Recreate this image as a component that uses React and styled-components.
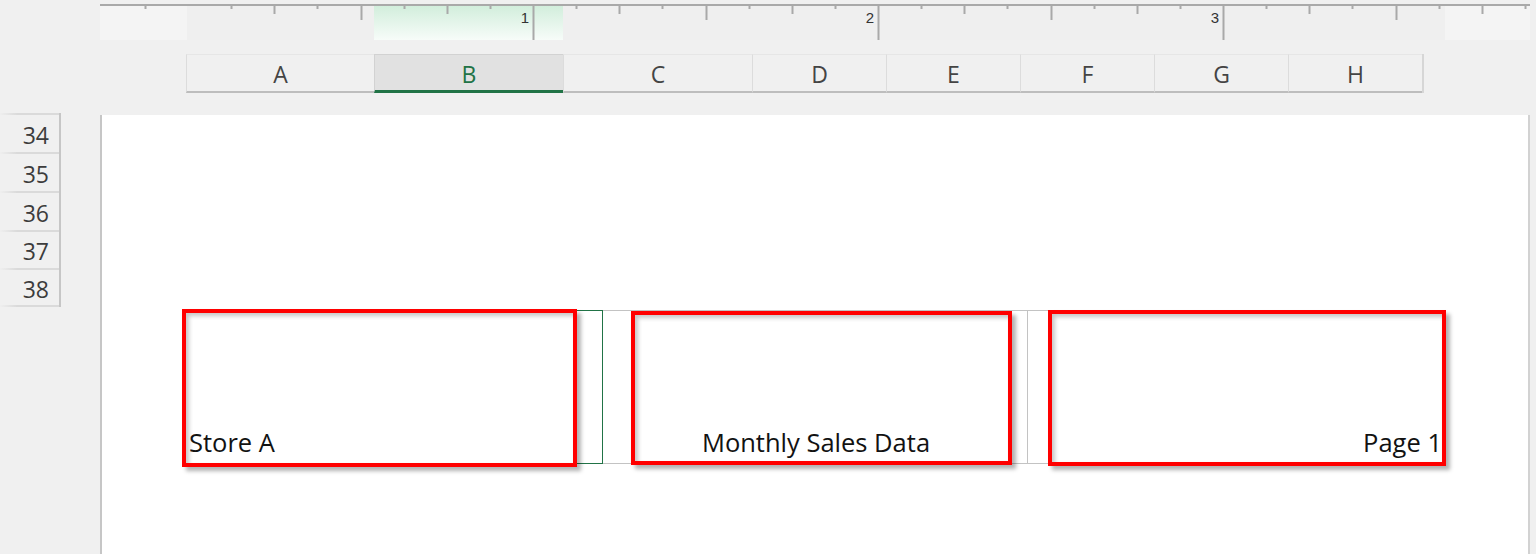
import React from "react";
import styled, { createGlobalStyle } from "styled-components";

const GlobalStyle = createGlobalStyle`
    html, body {
        margin: 0;
        padding: 0;
        background: #f0f0f0;
        overflow: hidden;
    }
`

const Screen = styled.div`
    width: 1536px;
    height: 554px;
    overflow: hidden;
    background: #f0f0f0;
    font-family: "Open Sans", "Noto Sans", sans-serif;
`

// ---- ruler ----
const RulerBar = styled.div`
    height: 40px;
    padding: 4px 0 0 100px;
    box-sizing: border-box;
`
const Ruler = styled.div`
    position: relative;
    width: 1430px;
    height: 34px;
    border-top: 2px solid #a9a9a9;
    display: flex;
`
const RulerMargin = styled.div`
    width: ${p => p.w}px;
    background: #f4f4f4;
`
const RulerBody = styled.div`
    flex: 1;
    background: #efefef;
    display: flex;
`
const RulerHighlight = styled.div`
    margin-left: ${p => p.offset}px;
    width: ${p => p.w}px;
    background: linear-gradient(#d2eedc, #f7fcf9);
`
const Ticks = styled.svg`
    position: absolute;
    left: 0;
    top: 0;
`
const RulerNumber = styled.span`
    position: absolute;
    top: 3px;
    font-family: "Liberation Sans", sans-serif;
    font-size: 15px;
    color: #333;
    transform: translateX(-100%);
`

// ---- column headers ----
const HeaderBar = styled.div`
    height: 73px;
    padding: 14px 0 0 186px;
    box-sizing: border-box;
`
const ColumnHeaders = styled.div`
    display: flex;
    height: 39px;
    width: 1236px;
    box-shadow: 2px 0 0 #d6d6d6;
`
const ColHead = styled.div`
    width: ${p => p.w}px;
    box-sizing: border-box;
    display: flex;
    align-items: center;
    justify-content: center;
    font-size: 23px;
    color: ${p => (p.active ? "#217346" : "#444")};
    background: ${p => (p.active ? "#e1e1e1" : "#f0f0f0")};
    border-left: 1px solid ${p => (p.active ? "#d2d2d2" : "#dcdcdc")};
    border-top: 1px solid ${p => (p.active ? "#d2d2d2" : "#e6e6e6")};
    border-bottom: ${p => (p.active ? "3px solid #217346" : "2px solid #bdbdbd")};
    padding-top: 2px;
`

// ---- body ----
const Body = styled.div`
    display: flex;
`
const RowHeaders = styled.div`
    width: 59px;
    border-right: 2px solid #c6c6c6;
    align-self: flex-start;
`
const RowHead = styled.div`
    height: ${p => p.h}px;
    box-sizing: border-box;
    display: flex;
    align-items: center;
    justify-content: flex-end;
    padding: 2px 10px 0 0;
    font-size: 23px;
    color: #3c3c3c;
    border-top: 2px solid transparent;
    border-image: linear-gradient(to right, #f0f0f0, #dadada 30%) 1;
    border-image-slice: 1;
    &:last-child {
        border-bottom: 2px solid transparent;
    }
`
const Page = styled.div`
    margin: 2px 0 0 39px;
    width: 1430px;
    height: 450px;
    box-sizing: border-box;
    background: #fff;
    border-left: 2px solid #c6c6c6;
    border-right: 2px solid #d2d2d2;
    padding: 195px 0 0 81px;
`
const Footer = styled.div`
    display: flex;
    height: 154px;
    font-family: "Open Sans", sans-serif;
    font-size: 25.5px;
    color: #121212;
`
const Section = styled.div`
    position: relative;
    width: ${p => p.w}px;
    box-sizing: border-box;
    display: flex;
    align-items: flex-end;
    justify-content: ${p => p.align};
    padding: 0 3px 9px 5px;
    line-height: 24px;
    border-top: 1px solid #c3c3c3;
    border-bottom: 1px solid #c3c3c3;
    border-right: 1px solid #c3c3c3;
    ${p => p.selected && `
        border: 1px solid #217346;
    `}
`
const Highlight = styled.div`
    position: absolute;
    left: ${p => p.x}px;
    top: ${p => p.y}px;
    width: ${p => p.w}px;
    height: ${p => p.h}px;
    box-sizing: border-box;
    border: 4px solid #ff0000;
    box-shadow: 4px 4px 4px rgba(0, 0, 0, 0.3), inset 3px 3px 4px rgba(0, 0, 0, 0.22);
    pointer-events: none;
`
const Label = styled.span`
    position: relative;
    z-index: 1;
`

const columns = [
    ["A", 188], ["B", 189], ["C", 189], ["D", 134],
    ["E", 134], ["F", 134], ["G", 134], ["H", 134],
];
const rows = [[34, 39], [35, 39], [36, 39], [37, 38], [38, 39]];

const ORIGIN = 88;
const STEP = 43.125;

const RulerTicks = () => {
    const lines = [];
    for (let k = -1; k <= 31; k++) {
        if (k === 0) continue;
        const x = Math.round(ORIGIN + k * STEP) + 0.5;
        let len = 3;
        if (k % 8 === 0) len = 34;
        else if (k % 4 === 0) len = 14;
        else if (k % 2 === 0) len = 8;
        lines.push(<line key={k} x1={x} x2={x} y1={0} y2={len} stroke="#a9a9a9" strokeWidth="2" />);
    }
    return (
        <Ticks width="1430" height="34">
            {lines}
        </Ticks>
    );
};

const App = () => {
    return (
        <Screen>
            <GlobalStyle />
            <RulerBar>
                <Ruler>
                    <RulerMargin w={87} />
                    <RulerBody>
                        <RulerHighlight offset={187} w={189} />
                    </RulerBody>
                    <RulerMargin w={85} />
                    <RulerTicks />
                    {[1, 2, 3].map(n => (
                        <RulerNumber key={n} style={{ left: ORIGIN + n * 345 - 4 }}>{n}</RulerNumber>
                    ))}
                </Ruler>
            </RulerBar>

            <HeaderBar>
                <ColumnHeaders>
                    {columns.map(([name, w]) => (
                        <ColHead key={name} w={w} active={name === "B"}>{name}</ColHead>
                    ))}
                </ColumnHeaders>
            </HeaderBar>

            <Body>
                <RowHeaders>
                    {rows.map(([n, h]) => (
                        <RowHead key={n} h={h}>{n}</RowHead>
                    ))}
                </RowHeaders>
                <Page>
                    <Footer>
                        <Section w={420} align="flex-start" selected>
                            <Label>Store A</Label>
                            <Highlight x={-2} y={-2} w={395} h={158} />
                        </Section>
                        <Section w={425} align="center">
                            <Label>Monthly Sales Data</Label>
                            <Highlight x={28} y={0} w={381} h={154} />
                        </Section>
                        <Section w={418} align="flex-end">
                            <Label>Page 1</Label>
                            <Highlight x={20} y={-1} w={398} h={156} />
                        </Section>
                    </Footer>
                </Page>
            </Body>
        </Screen>
    );
};

export default App;
